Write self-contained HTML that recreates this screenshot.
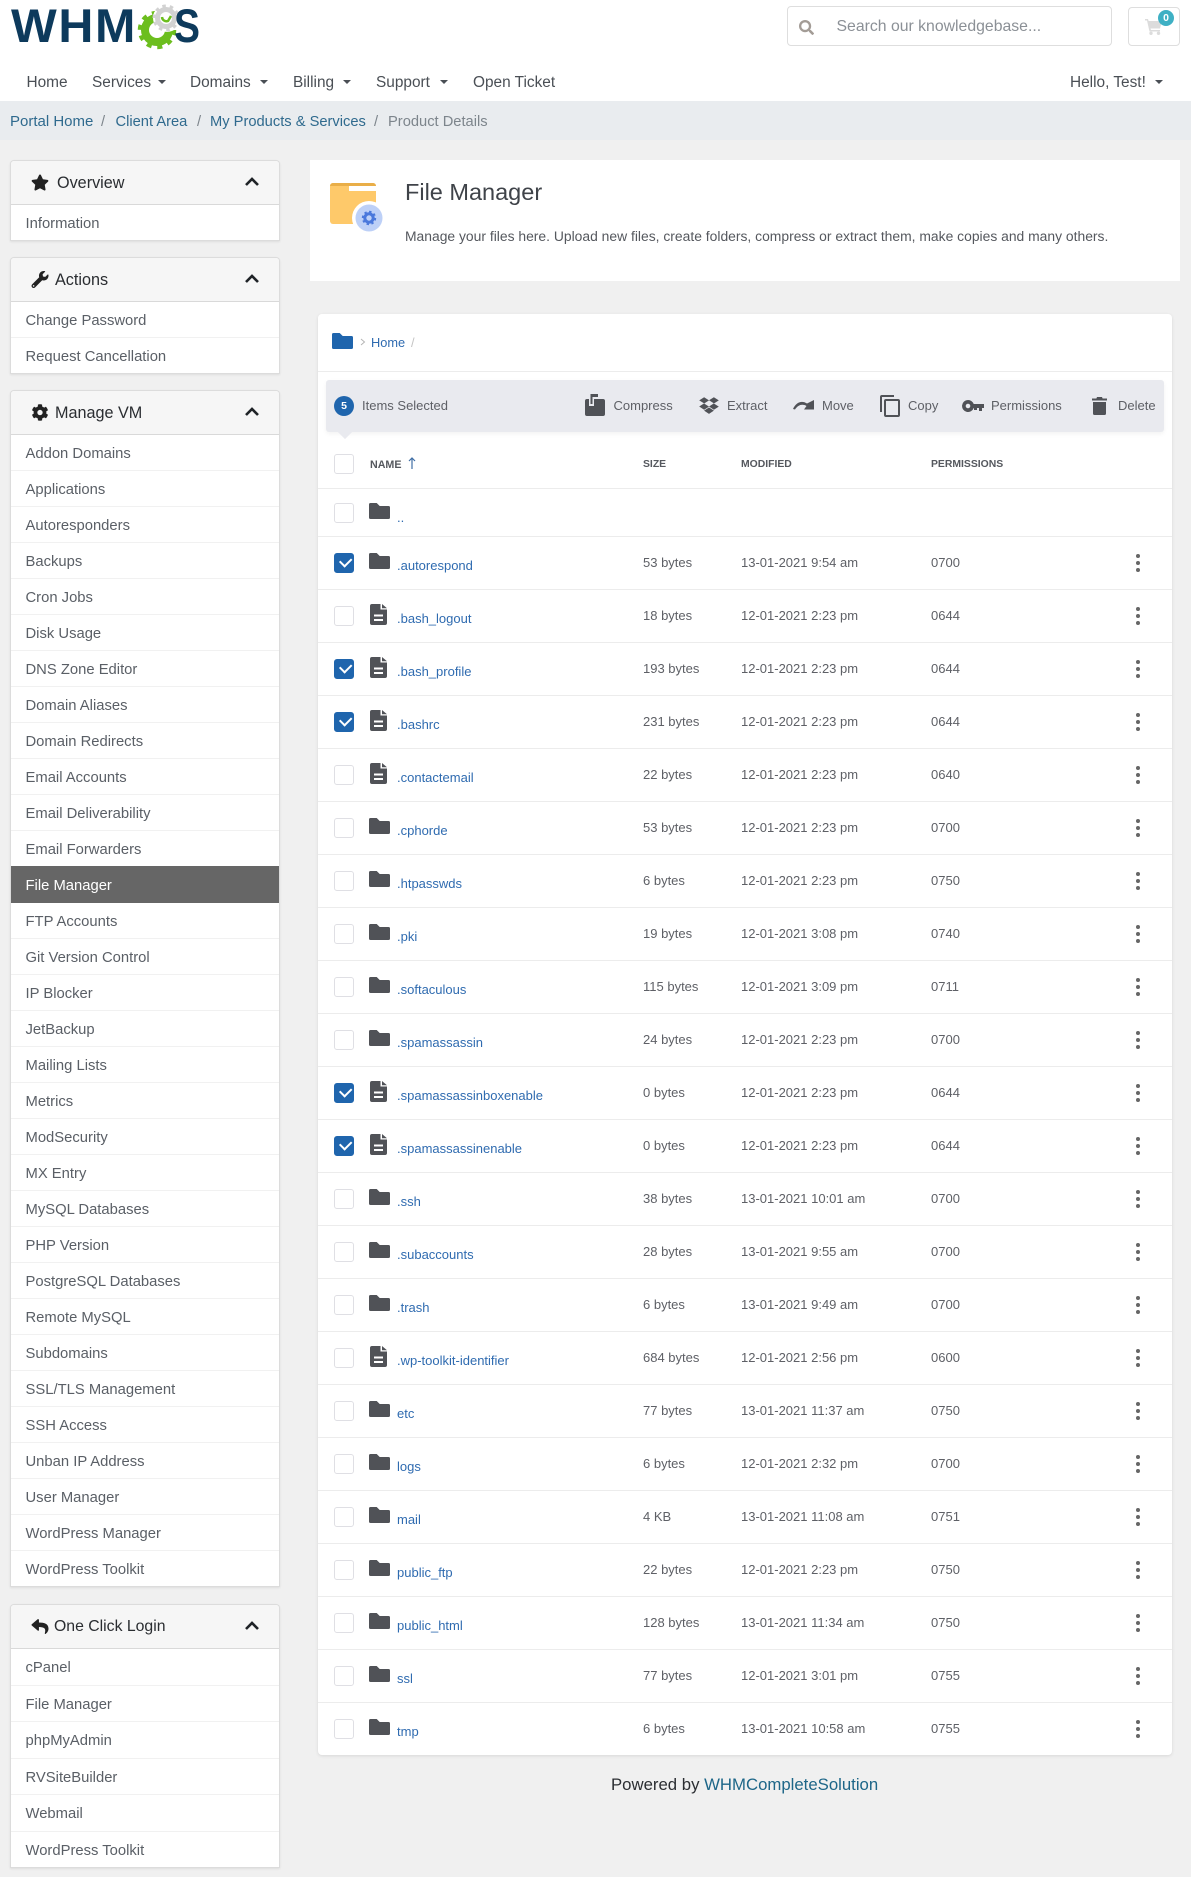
<!DOCTYPE html>
<html lang="en"><head><meta charset="utf-8"><title>File Manager</title>
<style>
*{box-sizing:border-box}
html,body{margin:0;padding:0}
body{width:1191px;height:1877px;background:#f0f0f0;position:relative;overflow:hidden;font-family:"Liberation Sans",sans-serif;color:#58595b}
.abs,.n,.bc{position:absolute;white-space:nowrap}
.top{position:absolute;left:0;top:0;width:1191px;height:101px;background:#fff}
.band{position:absolute;left:0;top:101px;width:1191px;height:39px;background:#e9ecef}
.n{top:73px;font-size:15.4px;line-height:20px;color:#4a4f55}
.ca{position:absolute;top:80px;width:0;height:0;border-left:4.5px solid transparent;border-right:4.5px solid transparent;border-top:4.5px solid #4a4f55}
.bc{top:112px;font-size:14.7px;line-height:20px;color:#2f6a8e}
.bc.g{color:#7d858c}
.pn{position:absolute;left:10px;width:270px;border:1px solid #dcdcdc;border-bottom:0;border-radius:4px 4px 0 0;background:#fff;box-shadow:0 1px 2px rgba(0,0,0,.08)}
.ph{height:44px;background:#f6f6f6;border-bottom:1px solid #d9d9d9;border-radius:3px 3px 0 0;position:relative;font-size:16.2px;line-height:44px;color:#2a2d31}
.ph span{position:absolute;top:0}
.ph svg.i{position:absolute;left:20px;top:13px;width:18px;height:17px;fill:#222}
.ph svg.ch{position:absolute;left:234px;top:16px;width:14px;height:9px;fill:none;stroke:#1f2327;stroke-width:2.6}
.it{height:36px;line-height:39px;padding-left:14.5px;font-size:14.8px;color:#5a5f66;border-bottom:1px solid #f1f1f1}
.it:last-child{border-bottom:1px solid #dcdcdc}
.it.a{background:#666;color:#fff;border-bottom-color:#666;margin-top:-1px;height:37px;line-height:41px}
.tl .it{height:36.5px}
.card{position:absolute;background:#fff}
.tb{font-size:13px;line-height:18px;top:397px;color:#5e6066;position:absolute;white-space:nowrap}
.tbi{position:absolute;fill:#505257}
.th{position:absolute;top:457px;font-size:10.4px;font-weight:bold;line-height:16px;color:#55585e}
.cb{position:absolute;left:16px;top:16px;width:20px;height:20px;border:1px solid #dfdfe4;border-radius:3px;background:#fff}
.cb.on{background:#1f65ad;border-color:#1f65ad}
.cb.on:after{content:"";position:absolute;left:4.5px;top:3px;width:9px;height:5.5px;border-left:2px solid #fff;border-bottom:2px solid #fff;transform:rotate(-45deg)}
#rows{position:absolute;left:318px;top:536px;width:854px}
.r{position:relative;height:53px;border-top:1px solid #ececec}
.r svg.f{position:absolute;left:51px;top:16px;width:21px;height:16px;fill:#505257}
.r svg.d{position:absolute;left:51.5px;top:13.5px;width:17px;height:21px;fill:#505257;fill-rule:evenodd}
.r a{position:absolute;left:79px;top:19px;font-size:13px;line-height:20px;color:#2f6bb0;text-decoration:none}
.r span{position:absolute;top:16px;font-size:13px;line-height:20px;color:#5e6066;white-space:nowrap}
.r .s{left:325px}.r .m{left:423px}.r .p{left:613px}
.r i{position:absolute;left:817.5px;top:17px;width:4px;height:4px;border-radius:50%;background:#666;box-shadow:0 7px 0 #666,0 14px 0 #666}
</style></head><body>
<svg width="0" height="0" style="position:absolute"><defs>
<path id="fo" d="M1.5 0h6.2l3 3h8.8a1.5 1.5 0 011.5 1.5v10a1.5 1.5 0 01-1.5 1.5H1.5A1.5 1.5 0 010 14.500V1.500A1.500 1.500 0 011.500 0z"/>
<path id="do" d="M2 0h8.500v5.500h6.500V19a2 2 0 01-2 2H2a2 2 0 01-2-2V2a2 2 0 012-2zM12 0l5 4.200h-5zM4 10.500v2h9v-2zM4 15v2h9v-2z"/>
</defs></svg>

<div class="top"></div>
<!-- Logo -->
<div class="abs" style="left:11px;top:-1px;font-size:47.500px;line-height:56px;font-weight:bold;color:#0d3a5c;letter-spacing:1.6px;transform:scaleX(1.02);transform-origin:left">WHM</div>
<svg class="abs" style="left:136px;top:2px" width="50" height="50" viewBox="0 0 50 50">
<circle cx="21" cy="28" r="12" fill="none" stroke="#6cbe1e" stroke-width="8"/>
<circle cx="21" cy="28" r="17" fill="none" stroke="#6cbe1e" stroke-width="4.500" stroke-dasharray="5 5.700"/>
<circle cx="31" cy="16" r="14" fill="#fff"/>
<circle cx="30" cy="16" r="8.500" fill="none" stroke="#d2d2d2" stroke-width="5"/>
<circle cx="30" cy="16" r="12" fill="none" stroke="#d2d2d2" stroke-width="3" stroke-dasharray="3.500 4"/>
<path d="M26 15a4.500 4.500 0 006 4l3-5" fill="none" stroke="#6cbe1e" stroke-width="2.500"/>
</svg>
<div class="abs" style="left:174px;top:-1px;font-size:47.500px;line-height:56px;font-weight:bold;color:#0d3a5c;transform:scaleX(.82);transform-origin:left">S</div>

<!-- Search -->
<div class="abs" style="left:787px;top:6px;width:325px;height:40px;border:1px solid #dedede;border-radius:4px;background:#fff"></div>
<svg class="abs" style="left:799px;top:20px" width="15" height="15" viewBox="0 0 512 512" fill="#a39c96"><path d="M505 442.700L405.300 343c-4.500-4.500-10.600-7-17-7H372c27.600-35.300 44-79.700 44-128C416 93.100 322.900 0 208 0S0 93.100 0 208s93.100 208 208 208c48.300 0 92.700-16.400 128-44v16.300c0 6.400 2.500 12.500 7 17l99.700 99.700c9.400 9.400 24.600 9.400 33.900 0l28.300-28.300c9.400-9.400 9.400-24.600.1-34zM208 336c-70.700 0-128-57.200-128-128 0-70.700 57.200-128 128-128 70.700 0 128 57.200 128 128 0 70.700-57.200 128-128 128z"/></svg>
<div class="abs" style="left:836.500px;top:17px;font-size:15.800px;line-height:20px;color:#8b9096">Search our knowledgebase...</div>
<div class="abs" style="left:1128px;top:7px;width:52px;height:39px;border:1px solid #dedede;border-radius:4px;background:#fff"></div>
<svg class="abs" style="left:1145px;top:19px" width="17" height="16" viewBox="0 0 17 16" fill="#dcdcdc"><path d="M0 0h3l.6 2H17l-2 7.500H5.500L6 11h9v1.500H4.500L2 1.500H0z"/><circle cx="6" cy="14.300" r="1.700"/><circle cx="13.500" cy="14.300" r="1.700"/></svg>
<div class="abs" style="left:1158px;top:10px;width:16px;height:16px;border-radius:50%;background:#3fb0c4;color:#fff;font-size:10.500px;font-weight:bold;line-height:16px;text-align:center">0</div>

<!-- Nav -->
<div class="n" style="left:26.500px">Home</div>
<div class="n" style="left:92px">Services</div><div class="ca" style="left:157.500px"></div>
<div class="n" style="left:190px">Domains</div><div class="ca" style="left:260px"></div>
<div class="n" style="left:293px">Billing</div><div class="ca" style="left:343px"></div>
<div class="n" style="left:376px">Support</div><div class="ca" style="left:440px"></div>
<div class="n" style="left:473px">Open Ticket</div>
<div class="n" style="left:1070px">Hello, Test!</div><div class="ca" style="left:1155px"></div>

<!-- Breadcrumb -->
<div class="band"></div>
<div class="bc" style="left:10px;font-size:15px">Portal Home</div><div class="bc g" style="left:101px">/</div>
<div class="bc" style="left:115.500px">Client Area</div><div class="bc g" style="left:197px">/</div>
<div class="bc" style="left:210px">My Products &amp; Services</div><div class="bc g" style="left:374px">/</div>
<div class="bc g" style="left:388px">Product Details</div>

<!-- Sidebar -->
<div class="pn" style="top:160px">
<div class="ph"><svg class="i" viewBox="0 0 576 512"><path d="M259.300 17.800L194 150.200 47.900 171.500c-26.200 3.800-36.700 36.100-17.700 54.600l105.700 103-25 145.500c-4.500 26.300 23.200 46 46.400 33.700L288 439.600l130.700 68.700c23.200 12.200 50.900-7.400 46.400-33.700l-25-145.500 105.700-103c19-18.500 8.500-50.800-17.700-54.600L382 150.200 316.700 17.800c-11.700-23.600-45.600-23.900-57.400 0z"/></svg><span style="left:46px">Overview</span><svg class="ch" viewBox="0 0 14 9"><path d="M1 8l6-6 6 6"/></svg></div>
<div class="it">Information</div>
</div>
<div class="pn" style="top:257px">
<div class="ph"><svg class="i" viewBox="0 0 512 512"><path d="M507.730 109.100c-2.240-9.030-13.540-12.090-20.120-5.510l-74.360 74.360-67.880-11.310-11.310-67.880 74.360-74.360c6.620-6.620 3.430-17.900-5.660-20.160-47.380-11.740-99.550.91-136.580 37.930-39.640 39.640-50.550 97.100-34.050 147.200L18.740 402.760c-24.990 24.990-24.990 65.510 0 90.500 24.990 24.990 65.510 24.990 90.500 0l213.210-213.210c50.120 16.710 107.470 5.680 147.370-34.220 37.070-37.070 49.700-89.320 37.910-136.730zM64 472c-13.250 0-24-10.750-24-24 0-13.260 10.750-24 24-24s24 10.740 24 24c0 13.250-10.750 24-24 24z"/></svg><span style="left:44px">Actions</span><svg class="ch" viewBox="0 0 14 9"><path d="M1 8l6-6 6 6"/></svg></div>
<div class="it">Change Password</div>
<div class="it">Request Cancellation</div>
</div>
<div class="pn" style="top:390px">
<div class="ph"><svg class="i" viewBox="0 0 512 512"><path d="M487.400 315.700l-42.600-24.600c4.300-23.200 4.300-47 0-70.200l42.600-24.600c4.900-2.800 7.100-8.600 5.500-14-11.100-35.600-30-67.800-54.700-94.600-3.800-4.100-10-5.100-14.800-2.300L380.800 110c-17.900-15.400-38.500-27.300-60.800-35.100V25.800c0-5.600-3.900-10.500-9.400-11.700-36.700-8.200-74.300-7.800-109.200 0-5.500 1.200-9.400 6.100-9.400 11.700V75c-22.200 7.900-42.800 19.800-60.800 35.100L88.700 85.500c-4.900-2.800-11-1.900-14.800 2.300-24.700 26.700-43.600 58.900-54.700 94.600-1.700 5.400.6 11.200 5.500 14L67.300 221c-4.300 23.200-4.300 47 0 70.200l-42.600 24.600c-4.900 2.800-7.100 8.600-5.500 14 11.100 35.600 30 67.800 54.700 94.600 3.800 4.100 10 5.100 14.800 2.300l42.600-24.600c17.900 15.400 38.500 27.300 60.800 35.100v49.200c0 5.600 3.900 10.500 9.400 11.700 36.700 8.200 74.300 7.800 109.200 0 5.500-1.200 9.400-6.100 9.400-11.700v-49.200c22.200-7.900 42.800-19.800 60.800-35.100l42.600 24.600c4.900 2.800 11 1.900 14.800-2.300 24.700-26.700 43.600-58.900 54.700-94.600 1.500-5.500-.7-11.300-5.600-14.100zM256 336c-44.100 0-80-35.900-80-80s35.900-80 80-80 80 35.900 80 80-35.900 80-80 80z"/></svg><span style="left:44px">Manage VM</span><svg class="ch" viewBox="0 0 14 9"><path d="M1 8l6-6 6 6"/></svg></div>
<div class="it">Addon Domains</div><div class="it">Applications</div><div class="it">Autoresponders</div><div class="it">Backups</div><div class="it">Cron Jobs</div><div class="it">Disk Usage</div><div class="it">DNS Zone Editor</div><div class="it">Domain Aliases</div><div class="it">Domain Redirects</div><div class="it">Email Accounts</div><div class="it">Email Deliverability</div><div class="it">Email Forwarders</div><div class="it a">File Manager</div><div class="it">FTP Accounts</div><div class="it">Git Version Control</div><div class="it">IP Blocker</div><div class="it">JetBackup</div><div class="it">Mailing Lists</div><div class="it">Metrics</div><div class="it">ModSecurity</div><div class="it">MX Entry</div><div class="it">MySQL Databases</div><div class="it">PHP Version</div><div class="it">PostgreSQL Databases</div><div class="it">Remote MySQL</div><div class="it">Subdomains</div><div class="it">SSL/TLS Management</div><div class="it">SSH Access</div><div class="it">Unban IP Address</div><div class="it">User Manager</div><div class="it">WordPress Manager</div><div class="it">WordPress Toolkit</div>
</div>
<div class="pn tl" style="top:1604px">
<div class="ph"><svg class="i" viewBox="0 0 512 512"><path d="M8.309 189.836L184.313 37.851C199.719 24.546 224 35.347 224 56.015v80.053c160.629 1.839 288 34.032 288 186.258 0 61.441-39.581 122.309-83.333 154.132-13.653 9.931-33.111-2.533-28.077-18.631 45.344-145.012-21.507-183.510-176.590-185.742V360c0 20.700-24.300 31.453-39.687 18.164l-176.004-152c-11.071-9.562-11.086-26.753 0-36.328z"/></svg><span style="left:43px;font-size:15.800px">One Click Login</span><svg class="ch" viewBox="0 0 14 9"><path d="M1 8l6-6 6 6"/></svg></div>
<div class="it">cPanel</div><div class="it">File Manager</div><div class="it">phpMyAdmin</div><div class="it">RVSiteBuilder</div><div class="it">Webmail</div><div class="it">WordPress Toolkit</div>
</div>

<!-- Hero card -->
<div class="card" style="left:310px;top:160px;width:870px;height:121px"></div>
<svg class="abs" style="left:326px;top:178px" width="62" height="60" viewBox="0 0 62 60">
<rect x="4" y="5" width="46" height="41" rx="3" fill="#fec96a"/>
<path d="M4 8a3 3 0 013-3h40a3 3 0 013 3H24l-2 0H4z" fill="#e9ae48"/>
<rect x="23" y="8" width="27" height="5" fill="#fff"/>
<circle cx="43" cy="40" r="17" fill="#fff"/>
<circle cx="43" cy="40" r="13.500" fill="#bdd0f7"/>
<circle cx="43" cy="40" r="4.200" fill="none" stroke="#4a78dc" stroke-width="3"/>
<circle cx="43" cy="40" r="6.200" fill="none" stroke="#4a78dc" stroke-width="2" stroke-dasharray="2.400 2.450"/>
</svg>
<div class="abs" style="left:405px;top:178px;font-size:23.500px;line-height:28px;color:#3f4349">File Manager</div>
<div class="abs" style="left:405px;top:226px;font-size:13.880px;line-height:20px;color:#55585e">Manage your files here. Upload new files, create folders, compress or extract them, make copies and many others.</div>

<!-- File card -->
<div class="card" style="left:318px;top:314px;width:854px;height:1441px;border-radius:4px;box-shadow:0 1px 3px rgba(0,0,0,.1)"></div>
<svg class="abs" style="left:332px;top:333px" width="21" height="16" viewBox="0 0 21 16" fill="#1f65ad"><use href="#fo"/></svg>
<svg class="abs" style="left:360px;top:338px" width="6" height="8" viewBox="0 0 6 8" fill="none" stroke="#b5b5b5" stroke-width="1"><path d="M1 1l3.500 3L1 7"/></svg>
<div class="abs" style="left:371px;top:334px;font-size:12.800px;line-height:18px;color:#2f6bb0">Home</div>
<div class="abs" style="left:411px;top:334px;font-size:12.800px;line-height:18px;color:#c4c4c4">/</div>
<div class="abs" style="left:318px;top:371px;width:854px;height:1px;background:#ececec"></div>
<div class="abs" style="left:326px;top:380px;width:838px;height:52px;background:#e9eaef;border-radius:3px;box-shadow:0 2px 5px rgba(0,0,0,.05)"></div>
<div class="abs" style="left:337.500px;top:425px;width:14px;height:14px;background:#e9eaef;transform:rotate(45deg) scale(.72)"></div>
<div class="abs" style="left:334px;top:396px;width:20px;height:20px;border-radius:50%;background:#1f65ad;color:#fff;font-size:10.500px;font-weight:bold;line-height:20px;text-align:center">5</div>
<div class="tb" style="left:362px">Items Selected</div>
<svg class="tbi" style="left:585px;top:394px" width="20" height="22" viewBox="0 0 20 22"><path d="M2 5h3.500V0H13v3H7.500v7H5.500V5zM9 5h9a2 2 0 012 2v13a2 2 0 01-2 2H2a2 2 0 01-2-2V7a2 2 0 012-2h2v7h5z"/></svg>
<div class="tb" style="left:613.500px">Compress</div>
<svg class="tbi" style="left:699px;top:396px" width="20" height="19" viewBox="0 0 528 512"><path d="M264.400 116.300l-132 84.300 132 84.300-132 84.300L0 284.100l132.300-84.300L0 116.300 132.300 32l132.100 84.300zM131.600 395.700l132-84.300 132 84.300-132 84.300-132-84.300zm132.800-111.600l132-84.300-132-83.600L395.700 32 528 116.300l-132.300 84.300L528 284.800l-132.300 84.300-131.300-85z"/></svg>
<div class="tb" style="left:727px">Extract</div>
<svg class="tbi" style="left:793px;top:400px" width="21" height="10" viewBox="0 0 21 10"><path d="M0 9C3 2 9 0 14 3.500L21 0v9.500H11L13.500 6C9 3.500 5 5 2 9.500z"/></svg>
<div class="tb" style="left:822px">Move</div>
<svg class="abs" style="left:880px;top:395px" width="20" height="22" viewBox="0 0 20 22" fill="none" stroke="#505257" stroke-width="2"><path d="M1 17V2a1 1 0 011-1h12"/><rect x="5" y="5" width="14" height="16" rx="1"/></svg>
<div class="tb" style="left:908px">Copy</div>
<svg class="tbi" style="left:962px;top:400px" width="22" height="12" viewBox="0 0 22 12"><path fill-rule="evenodd" d="M6 0a6 6 0 015.700 4H22v4h-2v3h-3V8h-2v2h-3V8h-.300A6 6 0 116 0zm0 3.700a2.300 2.300 0 100 4.600 2.300 2.300 0 000-4.600z"/></svg>
<div class="tb" style="left:991px">Permissions</div>
<svg class="tbi" style="left:1092px;top:397px" width="15" height="18" viewBox="0 0 15 18"><path d="M5 0h5l.6 1.500H15v2H0v-2h4.400zM1 5h13v11.500a1.500 1.500 0 01-1.500 1.500h-10A1.500 1.500 0 011 16.500z"/></svg>
<div class="tb" style="left:1118px">Delete</div>

<!-- Table head -->
<div class="abs" style="left:334px;top:454px;width:20px;height:20px;border:1px solid #dfdfe4;border-radius:3px;background:#fff"></div>
<div class="th" style="left:370px;font-size:10.700px">NAME</div>
<svg class="abs" style="left:408px;top:457px" width="8" height="12" viewBox="0 0 8 12" fill="none" stroke="#3f6ea5" stroke-width="1.200"><path d="M4 12V1M1 4l3-3 3 3"/></svg>
<div class="th" style="left:643px">SIZE</div>
<div class="th" style="left:741px">MODIFIED</div>
<div class="th" style="left:931px">PERMISSIONS</div>
<div class="abs" style="left:318px;top:488px;width:854px;height:1px;background:#ececec"></div>
<div class="abs" style="left:334px;top:503px;width:20px;height:20px;border:1px solid #dfdfe4;border-radius:3px;background:#fff"></div>
<svg class="abs" style="left:369px;top:503px" width="21" height="16" viewBox="0 0 21 16" fill="#505257"><use href="#fo"/></svg>
<div class="abs" style="left:397px;top:508px;font-size:13px;line-height:20px;color:#2f6bb0">..</div>

<div id="rows">
<div class="r"><b class="cb on"></b><svg class="f" viewBox="0 0 21 16"><use href="#fo"/></svg><a>.autorespond</a><span class="s">53 bytes</span><span class="m">13-01-2021 9:54 am</span><span class="p">0700</span><i></i></div>
<div class="r"><b class="cb"></b><svg class="d" viewBox="0 0 17 21"><use href="#do"/></svg><a>.bash_logout</a><span class="s">18 bytes</span><span class="m">12-01-2021 2:23 pm</span><span class="p">0644</span><i></i></div>
<div class="r"><b class="cb on"></b><svg class="d" viewBox="0 0 17 21"><use href="#do"/></svg><a>.bash_profile</a><span class="s">193 bytes</span><span class="m">12-01-2021 2:23 pm</span><span class="p">0644</span><i></i></div>
<div class="r"><b class="cb on"></b><svg class="d" viewBox="0 0 17 21"><use href="#do"/></svg><a>.bashrc</a><span class="s">231 bytes</span><span class="m">12-01-2021 2:23 pm</span><span class="p">0644</span><i></i></div>
<div class="r"><b class="cb"></b><svg class="d" viewBox="0 0 17 21"><use href="#do"/></svg><a>.contactemail</a><span class="s">22 bytes</span><span class="m">12-01-2021 2:23 pm</span><span class="p">0640</span><i></i></div>
<div class="r"><b class="cb"></b><svg class="f" viewBox="0 0 21 16"><use href="#fo"/></svg><a>.cphorde</a><span class="s">53 bytes</span><span class="m">12-01-2021 2:23 pm</span><span class="p">0700</span><i></i></div>
<div class="r"><b class="cb"></b><svg class="f" viewBox="0 0 21 16"><use href="#fo"/></svg><a>.htpasswds</a><span class="s">6 bytes</span><span class="m">12-01-2021 2:23 pm</span><span class="p">0750</span><i></i></div>
<div class="r"><b class="cb"></b><svg class="f" viewBox="0 0 21 16"><use href="#fo"/></svg><a>.pki</a><span class="s">19 bytes</span><span class="m">12-01-2021 3:08 pm</span><span class="p">0740</span><i></i></div>
<div class="r"><b class="cb"></b><svg class="f" viewBox="0 0 21 16"><use href="#fo"/></svg><a>.softaculous</a><span class="s">115 bytes</span><span class="m">12-01-2021 3:09 pm</span><span class="p">0711</span><i></i></div>
<div class="r"><b class="cb"></b><svg class="f" viewBox="0 0 21 16"><use href="#fo"/></svg><a>.spamassassin</a><span class="s">24 bytes</span><span class="m">12-01-2021 2:23 pm</span><span class="p">0700</span><i></i></div>
<div class="r"><b class="cb on"></b><svg class="d" viewBox="0 0 17 21"><use href="#do"/></svg><a>.spamassassinboxenable</a><span class="s">0 bytes</span><span class="m">12-01-2021 2:23 pm</span><span class="p">0644</span><i></i></div>
<div class="r"><b class="cb on"></b><svg class="d" viewBox="0 0 17 21"><use href="#do"/></svg><a>.spamassassinenable</a><span class="s">0 bytes</span><span class="m">12-01-2021 2:23 pm</span><span class="p">0644</span><i></i></div>
<div class="r"><b class="cb"></b><svg class="f" viewBox="0 0 21 16"><use href="#fo"/></svg><a>.ssh</a><span class="s">38 bytes</span><span class="m">13-01-2021 10:01 am</span><span class="p">0700</span><i></i></div>
<div class="r"><b class="cb"></b><svg class="f" viewBox="0 0 21 16"><use href="#fo"/></svg><a>.subaccounts</a><span class="s">28 bytes</span><span class="m">13-01-2021 9:55 am</span><span class="p">0700</span><i></i></div>
<div class="r"><b class="cb"></b><svg class="f" viewBox="0 0 21 16"><use href="#fo"/></svg><a>.trash</a><span class="s">6 bytes</span><span class="m">13-01-2021 9:49 am</span><span class="p">0700</span><i></i></div>
<div class="r"><b class="cb"></b><svg class="d" viewBox="0 0 17 21"><use href="#do"/></svg><a>.wp-toolkit-identifier</a><span class="s">684 bytes</span><span class="m">12-01-2021 2:56 pm</span><span class="p">0600</span><i></i></div>
<div class="r"><b class="cb"></b><svg class="f" viewBox="0 0 21 16"><use href="#fo"/></svg><a>etc</a><span class="s">77 bytes</span><span class="m">13-01-2021 11:37 am</span><span class="p">0750</span><i></i></div>
<div class="r"><b class="cb"></b><svg class="f" viewBox="0 0 21 16"><use href="#fo"/></svg><a>logs</a><span class="s">6 bytes</span><span class="m">12-01-2021 2:32 pm</span><span class="p">0700</span><i></i></div>
<div class="r"><b class="cb"></b><svg class="f" viewBox="0 0 21 16"><use href="#fo"/></svg><a>mail</a><span class="s">4 KB</span><span class="m">13-01-2021 11:08 am</span><span class="p">0751</span><i></i></div>
<div class="r"><b class="cb"></b><svg class="f" viewBox="0 0 21 16"><use href="#fo"/></svg><a>public_ftp</a><span class="s">22 bytes</span><span class="m">12-01-2021 2:23 pm</span><span class="p">0750</span><i></i></div>
<div class="r"><b class="cb"></b><svg class="f" viewBox="0 0 21 16"><use href="#fo"/></svg><a>public_html</a><span class="s">128 bytes</span><span class="m">13-01-2021 11:34 am</span><span class="p">0750</span><i></i></div>
<div class="r"><b class="cb"></b><svg class="f" viewBox="0 0 21 16"><use href="#fo"/></svg><a>ssl</a><span class="s">77 bytes</span><span class="m">12-01-2021 3:01 pm</span><span class="p">0755</span><i></i></div>
<div class="r"><b class="cb"></b><svg class="f" viewBox="0 0 21 16"><use href="#fo"/></svg><a>tmp</a><span class="s">6 bytes</span><span class="m">13-01-2021 10:58 am</span><span class="p">0755</span><i></i></div>
</div>

<div class="abs" style="left:611px;top:1775px;font-size:16.750px;line-height:20px;color:#2b2e32">Powered by <span style="color:#1d6688">WHMCompleteSolution</span></div>
</body></html>
